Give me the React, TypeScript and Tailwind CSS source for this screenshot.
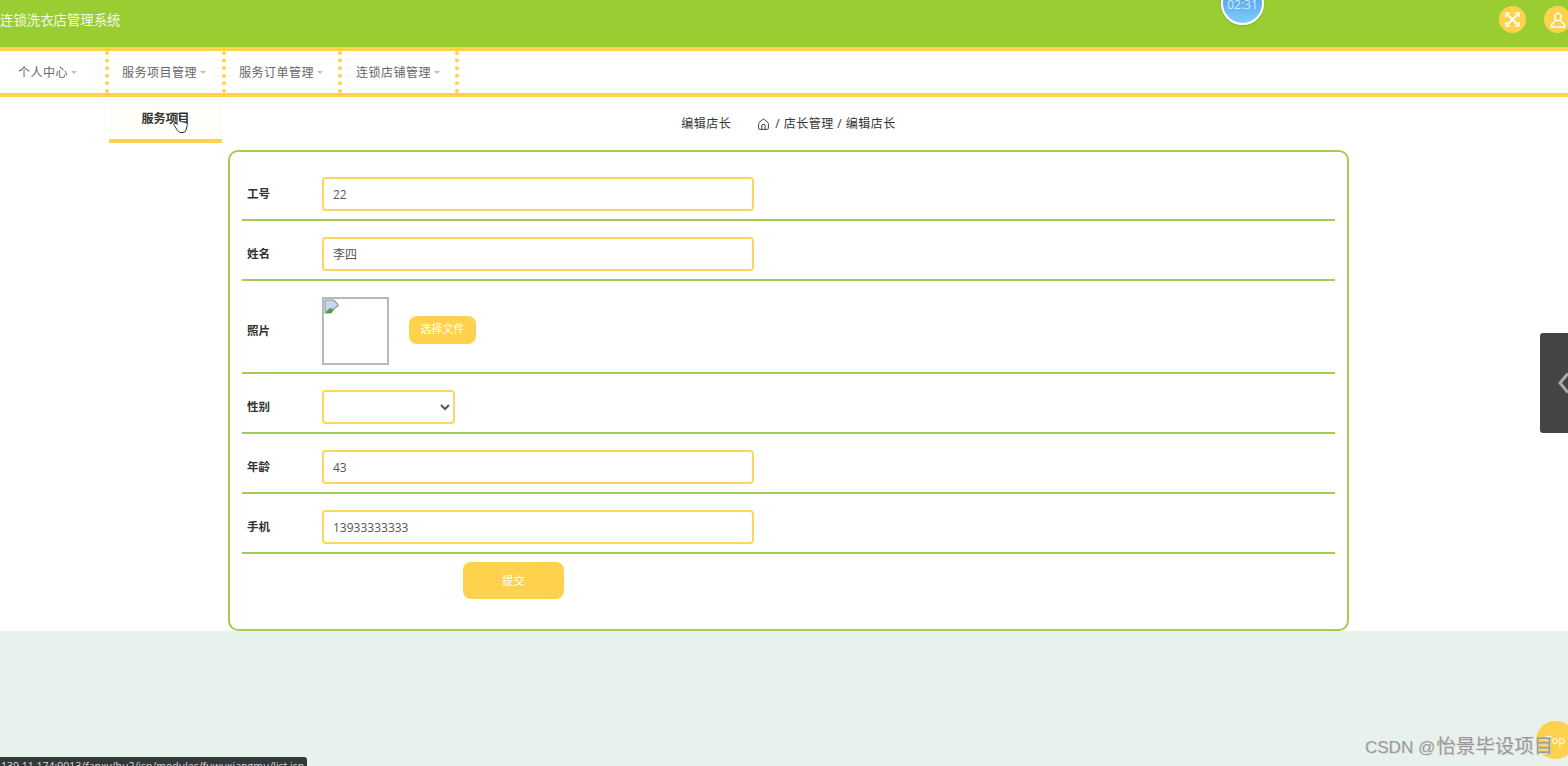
import { Home } from "lucide-react";

const navItems = [
    { label: "个人中心", width: "w-[109px]", pad: "pl-[18px]" },
    { label: "服务项目管理", width: "w-[117px]", pad: "pl-[13px]" },
    { label: "服务订单管理", width: "w-[116px]", pad: "pl-[13px]" },
    { label: "连锁店铺管理", width: "w-[117px]", pad: "pl-[14px]" },
];

function FormRow({ label, children, className }: { label: string; children: React.ReactNode; className: string }) {
    return (
        <div className={`flex items-center pt-[16px] pb-[8px] border-b-2 border-[#a5cc50] ${className}`}>
            <label className="w-[80px] pl-[5px] text-[11.5px] font-bold text-[#333]">{label}</label>
            {children}
        </div>
    );
}

function TextField({ value }: { value: string }) {
    return (
        <input
            readOnly
            value={value}
            className="w-[432px] h-[34px] px-[9px] border-2 border-[#fdd560] rounded-[4px] bg-white text-[12px] text-[#555] outline-none"
        />
    );
}

export default function App() {
    return (
        <div className="relative w-[1568px] h-[766px] overflow-hidden bg-[#e8f2ed] font-['Open_Sans','Noto_Sans_CJK_SC',sans-serif]">
            <header className="flex items-start h-[51px] pt-[6px] bg-[#9acd32] border-b-4 border-[#ffd24d]">
                <h1 className="text-[13.4px] leading-[29px] font-normal text-[#f4fae6] whitespace-nowrap">连锁洗衣店管理系统</h1>
                <div className="ml-auto flex gap-[18px] mr-[-3px]">
                    <button className="flex items-center justify-center w-[27px] h-[27px] rounded-full bg-[#ffd24d]">
                        <svg width="15" height="15" viewBox="0 0 15 15" fill="none" stroke="#fff" strokeWidth="1.8">
                            <path d="M2.500 2.500l10 10M12.500 2.500l-10 10" />
                            <path d="M1 5V1h4M10 1h4v4M14 10v4h-4M5 14H1v-4" strokeWidth="1.500" />
                        </svg>
                    </button>
                    <button className="flex items-center justify-center w-[27px] h-[27px] rounded-full bg-[#ffd24d]">
                        <svg width="16" height="16" viewBox="0 0 16 16" fill="none" stroke="#fff" strokeWidth="1.600">
                            <ellipse cx="8" cy="5" rx="3.200" ry="3.800" />
                            <path d="M5.800 8.500L1.500 12.500V15h13v-2.500L10.200 8.500" />
                        </svg>
                    </button>
                </div>
            </header>

            <nav className="flex h-[46px] bg-white border-b-4 border-[#ffd24d]">
                {navItems.map((item) => (
                    <div
                        key={item.label}
                        className={`flex items-center pt-[2px] ${item.width} ${item.pad} border-r-4 border-dotted border-[#ffd24d] text-[12px] tracking-[0.5px] text-[#666]`}
                    >
                        {item.label}
                        <span className="ml-[3px] mt-[-2px] border-x-[3px] border-t-[3px] border-x-transparent border-t-[#c0c0c0]" />
                    </div>
                ))}
            </nav>

            <main className="bg-white h-[534px]">
                <div className="ml-[228px] w-[1121px]">
                    <div className="flex items-center justify-center h-[53px] pt-[1px] text-[12px] tracking-[0.5px] text-[#333]">
                        <span>编辑店长</span>
                        <Home size={13} strokeWidth={1.7} className="ml-[26px] mr-[5px] text-[#333]" />
                        <span>/ 店长管理 / 编辑店长</span>
                    </div>

                    <form className="h-[481px] px-[12px] pt-[9px] border-2 border-[#a5cc50] rounded-[10px] bg-white">
                        <FormRow label="工号" className="h-[60px]">
                            <TextField value="22" />
                        </FormRow>
                        <FormRow label="姓名" className="h-[60px]">
                            <TextField value="李四" />
                        </FormRow>
                        <FormRow label="照片" className="h-[93px]">
                            <div className="relative w-[67px] h-[68px] border-2 border-[#b9b9b9] bg-white">
                                <svg width="15" height="15" viewBox="0 0 14 14" className="absolute left-[0px] top-[0px]">
                                    <path d="M1 1h8l4 4v1.500L9.500 9 6.500 13H1z" fill="#c4d8f5" stroke="#8f8f8f" strokeWidth="1" />
                                    <path d="M2 12l3.500-3.500L9 9.500 6.500 13H2z" fill="#4f9e4a" />
                                </svg>
                            </div>
                            <button type="button" className="ml-[20px] mt-[-2px] w-[67px] h-[28px] rounded-[8px] bg-[#ffd24d] text-[11px] text-white">
                                选择文件
                            </button>
                        </FormRow>
                        <FormRow label="性别" className="h-[60px]">
                            <select className="w-[133px] h-[34px] px-[8px] border-2 border-[#fdd560] rounded-[4px] bg-white text-[12px] text-[#555] outline-none">
                                <option></option>
                                <option>男</option>
                                <option>女</option>
                            </select>
                        </FormRow>
                        <FormRow label="年龄" className="h-[60px]">
                            <TextField value="43" />
                        </FormRow>
                        <FormRow label="手机" className="h-[60px]">
                            <TextField value="13933333333" />
                        </FormRow>
                        <div className="pt-[8px] pl-[221px]">
                            <button type="button" className="w-[101px] h-[37px] pt-[1px] rounded-[8px] bg-[#ffd24d] text-[11.5px] text-white">
                                提交
                            </button>
                        </div>
                    </form>
                </div>
            </main>

            {/* service dropdown, open under the hovered menu */}
            <div className="absolute left-[109px] top-[97px] flex justify-center w-[113px] h-[46px] pt-[14px] bg-[#fffdf8] border-b-4 border-[#ffd24d] text-[12px] font-bold leading-[16px] text-[#333]">
                服务项目
            </div>
            <svg width="18" height="22" viewBox="0 0 18 22" className="absolute left-[172px] top-[112px]">
                <path
                    d="M5 2c1-1 2.500 0 2.500 1v6l6 1.500c1.500.5 2 1.500 1.700 3L14 18c-.4 1.500-1.500 2.500-3 2.500H9c-1.500 0-2.500-.7-3.500-2L2 13c-.7-1.200.7-2.500 2-1.500l1 1z"
                    fill="#fff"
                    stroke="#333"
                    strokeWidth="1"
                />
            </svg>

            {/* recording timer */}
            <div className="absolute left-[1221px] top-[-18px] flex items-end justify-center w-[43px] h-[43px] pb-[11px] rounded-full border-2 border-white bg-gradient-to-b from-[#3f8ee8] to-[#7fd0fb] shadow-sm text-[12px] leading-[14px] text-[#d5ecff]">
                02:31
            </div>

            <div className="absolute right-0 top-[333px] flex items-center justify-end w-[28px] h-[100px] rounded-l-[3px] bg-[#444]">
                <svg width="10" height="24" viewBox="0 0 10 24">
                    <path d="M10 2.500L2 12l8 9.500" fill="none" stroke="#aaa" strokeWidth="3" />
                </svg>
            </div>

            <div className="absolute left-[1536px] top-[721px] flex items-center justify-center w-[39px] h-[38px] rounded-full bg-[#ffd24d] text-[11px] text-white">
                Top
            </div>

            <div className="absolute left-[1365px] top-[733px] text-[19.5px] leading-[27px] text-[#999] whitespace-nowrap font-['Liberation_Sans','Noto_Sans_CJK_SC',sans-serif] [text-shadow:1px_1px_0_#dcdcdc]">
                <span className="text-[17px] mr-[1px]">CSDN @</span>怡景毕设项目
            </div>

            <div className="absolute left-0 top-[757px] w-[307px] h-[9px] overflow-hidden rounded-tr-[3px] bg-[#343a3c] pl-[1px] pt-[3px] text-[10.5px] leading-[12px] text-[#d8d8d8] whitespace-nowrap">
                139.11.174:9013/fanxy/hu2/jsp/modules/fuwuxiangmu/list.jsp
            </div>
        </div>
    );
}
